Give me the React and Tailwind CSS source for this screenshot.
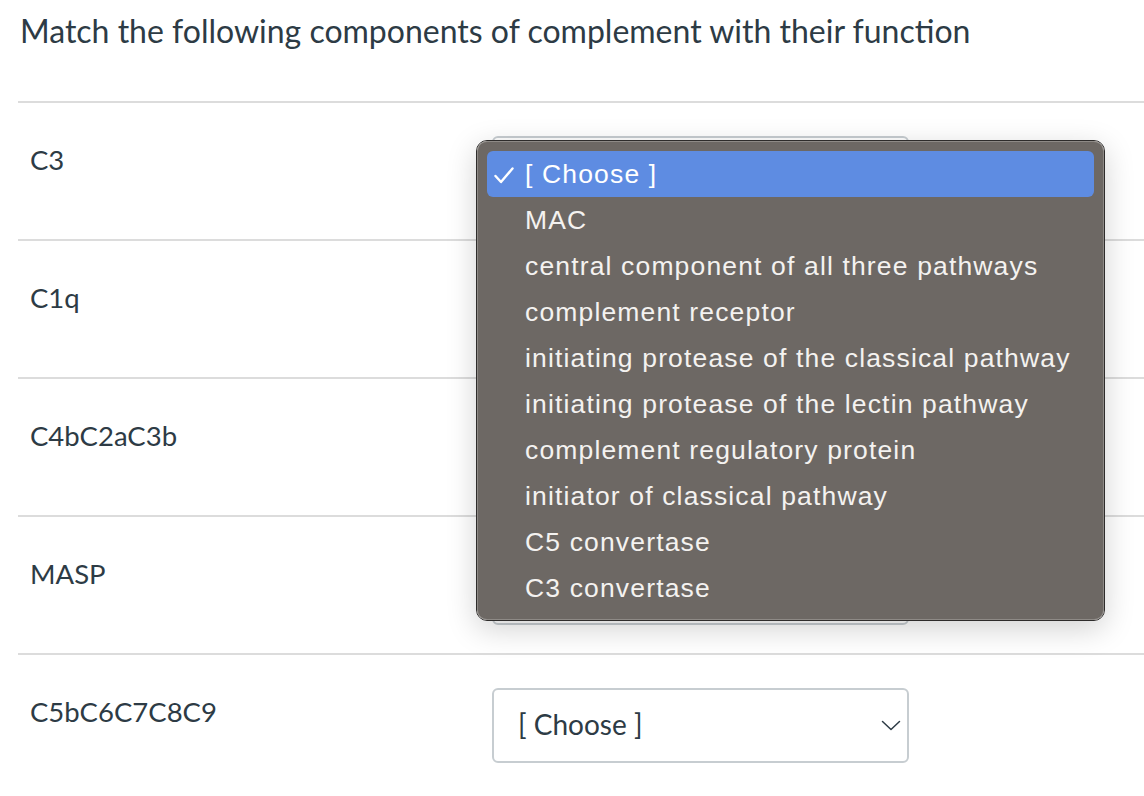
import React from "react";

const rows = ["C3", "C1q", "C4bC2aC3b", "MASP", "C5bC6C7C8C9"];

const options = [
  "[ Choose ]",
  "MAC",
  "central component of all three pathways",
  "complement receptor",
  "initiating protease of the classical pathway",
  "initiating protease of the lectin pathway",
  "complement regulatory protein",
  "initiator of classical pathway",
  "C5 convertase",
  "C3 convertase",
];

const SelectBox = () => (
  <div className="mt-[33px] ml-[474px] w-[417px] h-[75px] border-2 border-[#c7cdd1] rounded-[6px] bg-white flex items-center justify-between pl-[24px] pr-[6px]">
    <span className="text-[28px] leading-[34px] text-[#2d3b45] -mt-[3px]">[ Choose ]</span>
    <svg width="20" height="11" viewBox="0 0 20 11" fill="none">
      <path d="M1.5 1.5 L10 9.5 L18.5 1.5" stroke="#2d3b45" strokeWidth="1.5" strokeLinecap="round" strokeLinejoin="round" />
    </svg>
  </div>
);

const App = () => {
  return (
    <div className="relative w-[1144px] h-[796px] overflow-hidden bg-white font-['Lato',sans-serif]">
      <div className="pl-[18px]">
        <h1 className="pt-[11px] pl-[2px] h-[101px] text-[32px] leading-[40px] text-[#2d3b45] font-normal">
          Match the following components of complement with their function
        </h1>
        {rows.map((label) => (
          <div key={label} className="relative h-[138px] border-t-2 border-[#dcdcdc]">
            <div className="absolute left-[12px] top-[39px] text-[27.5px] leading-[36px] text-[#2d3b45]">
              {label}
            </div>
            <SelectBox />
          </div>
        ))}
      </div>

      <div className="absolute left-[476px] top-[140px] w-[629px] h-[481px] rounded-[11px] border border-[#2e2c2b] shadow-[0_8px_30px_rgba(0,0,0,0.18)]">
        <div className="h-full w-full rounded-[10px] border border-[#8e8a86] bg-[#6d6864] p-[9px] font-['Liberation_Sans',sans-serif]">
          {options.map((opt, i) => (
            <div
              key={opt}
              className={`flex items-center h-[46px] pt-[2px] rounded-[6px] text-[26.5px] tracking-[1.15px] text-[#f4f2f0] ${
                i === 0 ? "bg-[#5e8ce2] text-white" : ""
              }`}
            >
              <span className="w-[38px] flex justify-start pl-[6px]">
                {i === 0 && (
                  <svg width="22" height="19" viewBox="0 0 22 19" fill="none">
                    <path d="M2.5 10 L8 16 L19.5 2.5" stroke="white" strokeWidth="2.4" strokeLinecap="round" strokeLinejoin="round" />
                  </svg>
                )}
              </span>
              <span>{opt}</span>
            </div>
          ))}
        </div>
      </div>
    </div>
  );
};

export default App;
